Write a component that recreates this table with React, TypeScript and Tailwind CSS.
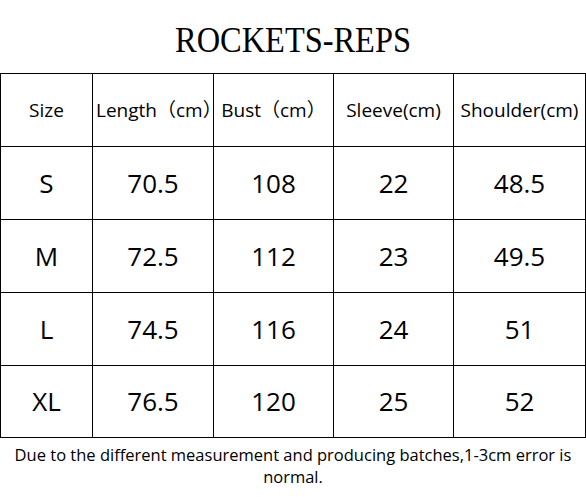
const headers = ["Size", "Length（cm）", "Bust（cm）", "Sleeve(cm)", "Shoulder(cm)"];

const rows = [
  ["S", "70.5", "108", "22", "48.5"],
  ["M", "72.5", "112", "23", "49.5"],
  ["L", "74.5", "116", "24", "51"],
  ["XL", "76.5", "120", "25", "52"],
];

const sans = "font-['Open_Sans','Noto_Sans_CJK_SC',sans-serif]";

export default function App() {
  return (
    <div className={`w-[586px] h-[497px] bg-white text-black ${sans}`}>
      <div className="h-[73px] pt-[7px] flex items-center justify-center">
        <h1 className="inline-block scale-x-[0.9] font-['Liberation_Serif',serif] text-[36px] leading-none font-normal">
          ROCKETS-REPS
        </h1>
      </div>

      <div className="grid grid-cols-[92px_121px_120px_120px_132px] grid-rows-[73px_73px_73px_73px_72px] border-l border-t border-black w-[586px]">
        {headers.map((h) => (
          <div
            key={h}
            className="flex items-center justify-center px-[3px] border-r border-b border-black text-[19px] whitespace-nowrap"
          >
            <span className="block w-full text-center">{h}</span>
          </div>
        ))}
        {rows.map((row) =>
          row.map((cell, i) => (
            <div
              key={row[0] + i}
              className="flex items-center justify-center border-r border-b border-black text-[26px]"
            >
              {cell}
            </div>
          ))
        )}
      </div>

      <p className="mt-[6px] px-2 text-center text-[16.5px] leading-[22px]">
        Due to the different measurement and producing batches,1-3cm error is normal.
      </p>
    </div>
  );
}
